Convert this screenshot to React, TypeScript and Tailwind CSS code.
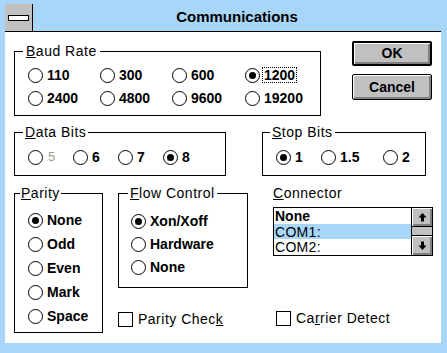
import type { ReactNode } from "react";

type RadioProps = {
  label: string;
  checked?: boolean;
  focus?: boolean;
  disabled?: boolean;
};

function Radio({ label, checked, focus, disabled }: RadioProps) {
  return (
    <div className="flex items-center h-[16px]">
      <span className="w-[15px] h-[15px] shrink-0 rounded-full border border-black bg-white flex items-center justify-center">
        {checked && <span className="w-[7px] h-[7px] rounded-full bg-black" />}
      </span>
      {focus ? (
        <span className="ml-[2px] px-[1px] border border-dotted border-black font-bold text-[14px] leading-[14px]">
          {label}
        </span>
      ) : (
        <span
          className={
            disabled
              ? "ml-[5px] text-[13px] leading-[16px] text-[#9a9a9a]"
              : "ml-[4px] font-bold text-[14px] leading-[16px]"
          }
        >
          {label}
        </span>
      )}
    </div>
  );
}

function Check({ children }: { children: ReactNode }) {
  return (
    <div className="flex items-center h-[16px]">
      <span className="w-[15px] h-[15px] shrink-0 border border-black bg-white" />
      <span className="ml-[5px] text-[14px] leading-[16px] tracking-[0.5px]">{children}</span>
    </div>
  );
}

function Arrow({ down }: { down?: boolean }) {
  return (
    <svg width="9" height="10" viewBox="0 0 9 10" className={down ? "rotate-180" : ""}>
      <path d="M4.5 1 L8.5 5.5 H6 V9.5 H3 V5.5 H0.5 Z" fill="#000" />
    </svg>
  );
}

const bevel = "shadow-[inset_1px_1px_0_#ffffff,inset_-2px_-2px_0_#808080]";

export default function App() {
  return (
    <div
      className="w-[447px] h-[353px] bg-[#a8d6f8] pt-[4px] pl-[5px] pr-[6px] pb-[10px] text-black"
      style={{ fontFamily: '"Liberation Sans", Arial, sans-serif' }}
    >
      <div className="w-[436px] h-[339px] bg-white flex flex-col">
        {/* title bar */}
        <div className="h-[28px] shrink-0 flex border-b border-black bg-[#a8d6f8]">
          <div className="w-[28px] border-r border-black bg-[#c0c0c0] flex items-center justify-center">
            <span className="w-[21px] h-[6px] bg-white border border-black" />
          </div>
          <div className="flex-1 flex items-center justify-center font-bold text-[15px]">Communications</div>
        </div>

        {/* baud rate + buttons */}
        <div className="flex items-start pl-[9px]">
          <fieldset className="mt-[11px] w-[307px] h-[73px] border border-black">
            <legend className="ml-[8px] px-[3px] text-[14px] leading-[17px] tracking-[0.5px]">
              <u>B</u>aud Rate
            </legend>
            <div className="grid grid-cols-[72px_72px_73px_auto] gap-y-[7px] pl-[13px] pt-[7px]">
              <Radio label="110" />
              <Radio label="300" />
              <Radio label="600" />
              <Radio label="1200" checked focus />
              <Radio label="2400" />
              <Radio label="4800" />
              <Radio label="9600" />
              <Radio label="19200" />
            </div>
          </fieldset>
          <div className="mt-[9px] ml-[31px] flex flex-col gap-[8px]">
            <button
              type="button"
              className={`w-[80px] h-[25px] rounded-[2px] border-2 border-black bg-[#c0c0c0] font-bold text-[14px] ${bevel}`}
            >
              OK
            </button>
            <button
              type="button"
              className={`w-[80px] h-[26px] rounded-[2px] border border-black bg-[#c0c0c0] font-bold text-[14px] ${bevel}`}
            >
              Cancel
            </button>
          </div>
        </div>

        {/* data bits / stop bits */}
        <div className="flex mt-[8px] pl-[9px]">
          <fieldset className="w-[212px] h-[52px] border border-black">
            <legend className="ml-[8px] px-[2px] text-[14px] leading-[17px] tracking-[0.5px]">
              <u>D</u>ata Bits
            </legend>
            <div className="grid grid-cols-[45px_45px_45px_auto] pl-[13px] pt-[8px]">
              <Radio label="5" disabled />
              <Radio label="6" />
              <Radio label="7" />
              <Radio label="8" checked />
            </div>
          </fieldset>
          <fieldset className="ml-[36px] w-[164px] h-[52px] border border-black">
            <legend className="ml-[7px] px-[2px] text-[14px] leading-[17px] tracking-[0.5px]">
              <u>S</u>top Bits
            </legend>
            <div className="grid grid-cols-[45px_62px_auto] pl-[13px] pt-[8px]">
              <Radio label="1" checked />
              <Radio label="1.5" />
              <Radio label="2" />
            </div>
          </fieldset>
        </div>

        {/* parity / flow control / connector */}
        <div className="flex items-start mt-[9px] pl-[9px]">
          <fieldset className="w-[89px] h-[148px] border border-black">
            <legend className="ml-[5px] px-[1px] text-[14px] leading-[17px] tracking-[0.5px]">
              <u>P</u>arity
            </legend>
            <div className="flex flex-col gap-[8px] pl-[13px] pt-[10px]">
              <Radio label="None" checked />
              <Radio label="Odd" />
              <Radio label="Even" />
              <Radio label="Mark" />
              <Radio label="Space" />
            </div>
          </fieldset>

          <div className="ml-[15px] flex flex-col">
            <fieldset className="w-[130px] h-[103px] border border-black">
              <legend className="ml-[9px] px-[2px] text-[14px] leading-[17px] tracking-[0.5px]">
                <u>F</u>low Control
              </legend>
              <div className="flex flex-col gap-[7px] pl-[12px] pt-[11px]">
                <Radio label="Xon/Xoff" checked />
                <Radio label="Hardware" />
                <Radio label="None" />
              </div>
            </fieldset>
            <div className="mt-[23px]">
              <Check>
                Parity Chec<u>k</u>
              </Check>
            </div>
          </div>

          <div className="ml-[25px] w-[160px] flex flex-col">
            <div className="text-[14px] leading-[17px] tracking-[0.5px]">
              <u>C</u>onnector
            </div>
            <div className="mt-[5px] h-[49px] border border-black flex">
              <ul className="flex-1 text-[14px] leading-[16px]">
                <li className="h-[16px] pl-[1px] font-bold">None</li>
                <li className="h-[15px] pl-[1px] bg-[#a8d6f8] tracking-[0.3px]">COM1:</li>
                <li className="h-[16px] pl-[1px] tracking-[0.3px]">COM2:</li>
              </ul>
              <div className="w-[21px] border-l border-black flex flex-col">
                <div className={`h-[18px] bg-[#c0c0c0] flex items-center justify-center ${bevel}`}>
                  <Arrow />
                </div>
                <div className="h-[10px] border-y border-black bg-[#c0c0c0]" />
                <div className={`flex-1 bg-[#c0c0c0] flex items-center justify-center ${bevel}`}>
                  <Arrow down />
                </div>
              </div>
            </div>
            <div className="mt-[54px] pl-[3px]">
              <Check>
                Ca<u>r</u>rier Detect
              </Check>
            </div>
          </div>
        </div>
      </div>
    </div>
  );
}
